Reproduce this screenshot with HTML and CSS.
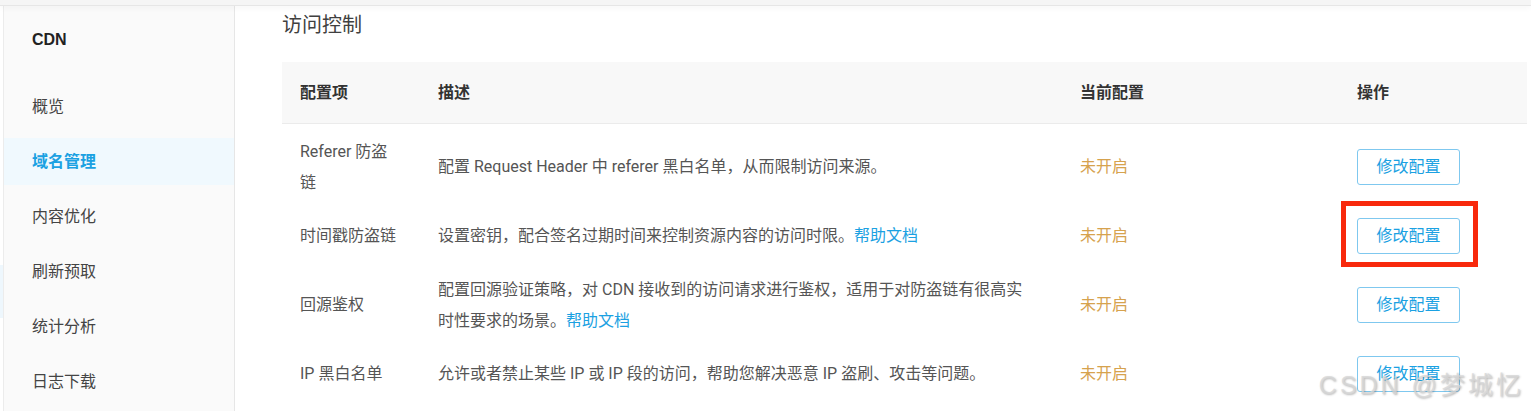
FILE: index.html
```html
<!DOCTYPE html>
<html lang="zh-CN">
<head>
<meta charset="utf-8">
<title>CDN - 访问控制</title>
<link rel="stylesheet" href="styles.css">
</head>
<body>
<div class="topbar"></div>
<div class="layout">
  <div class="gutter"><div class="gutter-mark"></div></div>
  <aside class="sidebar">
    <div class="brand">CDN</div>
    <nav class="nav">
      <div class="nav-item">概览</div>
      <div class="nav-item active">域名管理</div>
      <div class="nav-item">内容优化</div>
      <div class="nav-item">刷新预取</div>
      <div class="nav-item">统计分析</div>
      <div class="nav-item">日志下载</div>
    </nav>
  </aside>
  <main class="main">
    <h2 class="title">访问控制</h2>
    <div class="table">
      <div class="row head">
        <div class="cell c1">配置项</div>
        <div class="cell c2">描述</div>
        <div class="cell c3">当前配置</div>
        <div class="cell c4">操作</div>
      </div>
      <div class="body">
        <div class="row">
          <div class="cell c1">Referer 防盗链</div>
          <div class="cell c2">配置 Request Header 中 referer 黑白名单，从而限制访问来源。</div>
          <div class="cell c3 status">未开启</div>
          <div class="cell c4"><span class="btn-wrap"><button class="btn">修改配置</button></span></div>
        </div>
        <div class="row">
          <div class="cell c1">时间戳防盗链</div>
          <div class="cell c2">设置密钥，配合签名过期时间来控制资源内容的访问时限。<a class="link">帮助文档</a></div>
          <div class="cell c3 status">未开启</div>
          <div class="cell c4"><span class="btn-wrap"><button class="btn">修改配置</button><span class="highlight"></span></span></div>
        </div>
        <div class="row">
          <div class="cell c1">回源鉴权</div>
          <div class="cell c2">配置回源验证策略，对 CDN 接收到的访问请求进行鉴权，适用于对防盗链有很高实时性要求的场景。<a class="link">帮助文档</a></div>
          <div class="cell c3 status">未开启</div>
          <div class="cell c4"><span class="btn-wrap"><button class="btn">修改配置</button></span></div>
        </div>
        <div class="row">
          <div class="cell c1">IP 黑白名单</div>
          <div class="cell c2">允许或者禁止某些 IP 或 IP 段的访问，帮助您解决恶意 IP 盗刷、攻击等问题。</div>
          <div class="cell c3 status">未开启</div>
          <div class="cell c4"><span class="btn-wrap"><button class="btn">修改配置</button></span></div>
        </div>
      </div>
    </div>
  </main>
</div>
<div class="watermark">CSDN @梦城忆</div>
</body>
</html>
```

FILE: styles.css
```css
* { box-sizing: border-box; }

html, body {
  margin: 0;
  padding: 0;
  background: #ffffff;
  height: 100%;
  overflow: hidden;
}

body {
  font-family: Roboto, "Noto Sans CJK SC", sans-serif;
  font-size: 16px;
  color: #555555;
  position: relative;
}

.topbar {
  height: 6px;
  background: #f5f5f5;
  border-bottom: 1px solid #e6e6e6;
  box-shadow: 0 2px 6px rgba(0, 0, 0, 0.04);
  position: relative;
  z-index: 1;
}

.layout {
  display: flex;
  height: calc(100vh - 6px);
}

.gutter {
  width: 3px;
  flex: none;
  padding-top: 259px;
}

.gutter-mark {
  height: 53px;
  background: #eef7fd;
}

.sidebar {
  width: 232px;
  flex: none;
  background: #fafafa;
  border-left: 1px solid #ececec;
  border-right: 1px solid #e6e6e6;
}

.brand {
  padding: 22px 0 0 28px;
  height: 76.5px;
  line-height: 24px;
  font-family: "Liberation Sans", Arial, sans-serif;
  font-weight: bold;
  font-size: 16px;
  color: #222222;
}

.nav {
  display: flex;
  flex-direction: column;
  gap: 8.2px;
}

.nav-item {
  height: 47px;
  line-height: 47px;
  padding-left: 28px;
  font-size: 16px;
  color: #444444;
}

.nav-item.active {
  background: #f0f9fe;
  color: #1ba1e2;
  font-weight: bold;
}

.main {
  flex: 1;
  padding: 5px 4px 0 47px;
}

.title {
  margin: 0 0 23px 0;
  height: 28px;
  line-height: 28px;
  font-size: 20px;
  font-weight: normal;
  color: #404040;
}

.row {
  display: grid;
  grid-template-columns: 138px 642px 277px 1fr;
  align-items: center;
  height: 69px;
}

.row.head {
  height: 62px;
  background: #f8f8f8;
  border-bottom: 1px solid #ebebeb;
  font-weight: bold;
  color: #333333;
}

.body {
  padding-top: 8px;
}

.cell {
  padding-left: 18px;
  line-height: 31px;
}

.c1 { padding-right: 20px; }
.c2 { padding-right: 24px; }

.status {
  color: #d6a24e;
}

.link {
  color: #1ba1e2;
  text-decoration: none;
}

.btn-wrap {
  position: relative;
  display: inline-block;
  vertical-align: middle;
}

.btn {
  display: block;
  width: 103px;
  height: 36px;
  padding: 0;
  background: #ffffff;
  border: 1px solid #7fc8ef;
  border-radius: 3px;
  color: #1ba1e2;
  font-family: Roboto, "Noto Sans CJK SC", sans-serif;
  font-size: 16px;
  line-height: 34px;
  cursor: pointer;
}

.highlight {
  position: absolute;
  left: -16px;
  right: -18px;
  top: -17px;
  bottom: -13px;
  border: 5px solid #f8290c;
}

.watermark {
  position: absolute;
  right: 7px;
  bottom: 11px;
  font-family: "Liberation Sans", Arial, "Noto Sans CJK SC", sans-serif;
  font-size: 25px;
  font-weight: normal;
  letter-spacing: 3px;
  color: rgba(215, 215, 215, 0.8);
  text-shadow: 1px 1px 2px rgba(60, 60, 60, 0.35);
  line-height: 30px;
}
```
